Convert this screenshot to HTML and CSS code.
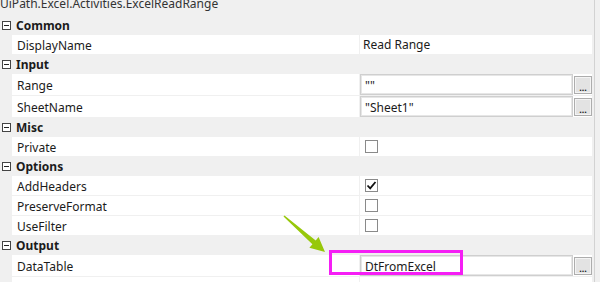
FILE: index.html
```html
<!DOCTYPE html>
<html lang="en">
<head>
    <meta charset="UTF-8">
    <title>Properties - ExcelReadRange</title>
    <link rel="stylesheet" href="styles.css">
</head>
<body>
    <div class="panel">
        <div class="title"><span>UiPath.Excel.Activities.ExcelReadRange</span></div>

        <div class="category"><span class="toggle"></span>Common</div>
        <div class="prop">
            <div class="name">DisplayName</div>
            <div class="value">Read Range</div>
        </div>

        <div class="category"><span class="toggle"></span>Input</div>
        <div class="prop tall">
            <div class="name">Range</div>
            <div class="value"><div class="textbox">""</div><button class="more">...</button></div>
        </div>
        <div class="prop tall">
            <div class="name">SheetName</div>
            <div class="value"><div class="textbox">"Sheet1"</div><button class="more">...</button></div>
        </div>

        <div class="category"><span class="toggle"></span>Misc</div>
        <div class="prop">
            <div class="name">Private</div>
            <div class="value"><span class="check"></span></div>
        </div>

        <div class="category"><span class="toggle"></span>Options</div>
        <div class="prop">
            <div class="name">AddHeaders</div>
            <div class="value"><span class="check">
                <svg width="11" height="11" viewBox="0 0 11 11"><polyline points="1.5,5.5 4.2,8.3 9.5,2" fill="none" stroke="#111" stroke-width="1.8"/></svg>
            </span></div>
        </div>
        <div class="prop">
            <div class="name">PreserveFormat</div>
            <div class="value"><span class="check"></span></div>
        </div>
        <div class="prop">
            <div class="name">UseFilter</div>
            <div class="value"><span class="check"></span></div>
        </div>

        <div class="category"><span class="toggle"></span>Output</div>
        <div class="prop tall">
            <div class="name">DataTable</div>
            <div class="value"><div class="textbox">DtFromExcel</div><button class="more">...</button></div>
        </div>
        <div class="prop">
            <div class="name"></div>
            <div class="value"></div>
        </div>
    </div>

    <!-- annotation drawn on top of the screenshot -->
    <div class="highlight"></div>
    <svg class="arrow" width="600" height="282" viewBox="0 0 600 282">
        <polygon points="283.5,216.5 312.4,244.3 309.4,247.7 325,252 318.6,237.1 315.7,240.5 284.5,215.5" fill="#97c80a"/>
    </svg>
</body>
</html>
```

FILE: styles.css
```css
body {
    margin: 0;
    background-color: #f0f0f0;
    font-family: "Noto Sans", "Noto Sans CJK SC", sans-serif;
    font-size: 12px;
    color: #1b1b1b;
    overflow: hidden;
}

.panel {
    width: 592px;
    padding-right: 2px;
    border-right: 1px solid #d2d2d2;
    height: 282px;
    overflow: hidden;
}

.title {
    height: 16px;
    overflow: hidden;
    color: #333;
}

.title span {
    display: block;
    margin-top: -4px;
    line-height: 16px;
}

.category {
    height: 19px;
    display: flex;
    align-items: center;
    font-weight: bold;
    font-size: 12px;
}

.toggle {
    width: 7px;
    height: 7px;
    border: 1px solid #444;
    margin: 0 5px 0 2px;
    position: relative;
    background-color: #fff;
}

.toggle::after {
    content: "";
    position: absolute;
    left: 1px;
    right: 1px;
    top: 3px;
    height: 1px;
    background-color: #222;
}

.prop {
    display: flex;
    height: 19px;
    border-bottom: 1px solid #f0f0f0;
    margin-left: 12px;
    background-color: #fff;
}

.prop.tall {
    height: 21px;
}

.name {
    width: 342px;
    padding-left: 5px;
    padding-top: 1px;
    border-right: 1px solid #f0f0f0;
    display: flex;
    align-items: center;
}

.value {
    flex: 1;
    display: flex;
    align-items: center;
    padding-left: 3px;
}

.prop.tall .value {
    padding-left: 0;
    align-items: stretch;
    gap: 1px;
}

.textbox {
    width: 207px;
    border: 1px solid #cfcfcf;
    box-shadow: inset 0 0 0 1px #e6e6e6;
    padding-left: 4px;
    padding-top: 1px;
    display: flex;
    align-items: center;
    background-color: #fff;
}

.more {
    width: 18px;
    height: 18px;
    margin-top: 2px;
    padding: 0;
    border: 1px solid #adadad;
    box-shadow: inset 0 0 0 1px #f4f4f4;
    background-color: #e3e3e3;
    font-family: "Noto Sans", sans-serif;
    font-size: 9px;
    font-weight: bold;
    line-height: 22px;
    color: #1a1a1a;
}

.check {
    width: 11px;
    height: 11px;
    margin-left: 2px;
    border: 1px solid #8a8a8a;
    background-color: #fff;
    display: flex;
    align-items: center;
    justify-content: center;
}

.highlight {
    position: absolute;
    left: 329px;
    top: 250px;
    width: 128px;
    height: 19px;
    border: 3px solid #f51ef5;
}

.arrow {
    position: absolute;
    left: 0;
    top: 0;
    pointer-events: none;
}
```
